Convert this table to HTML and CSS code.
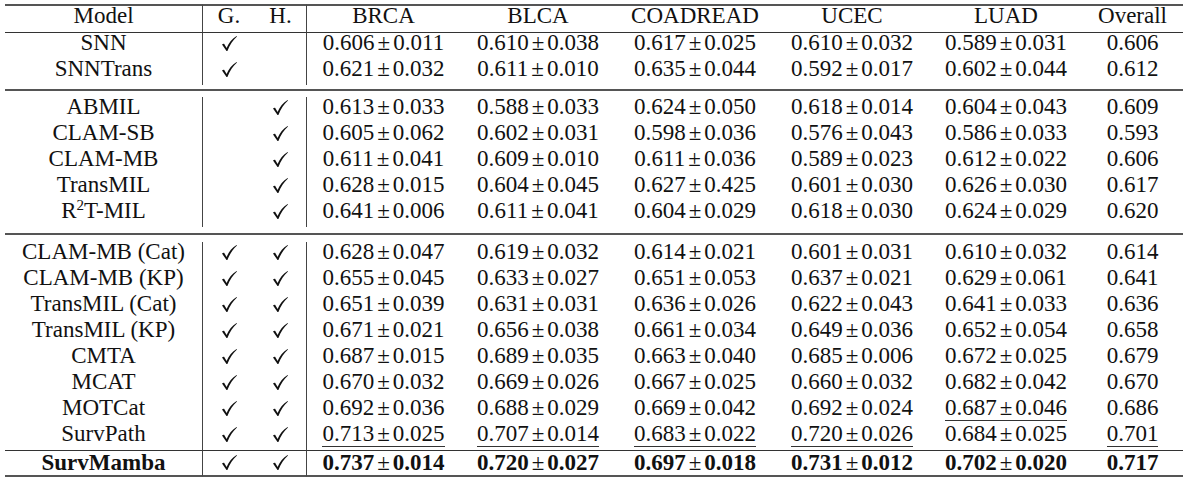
FILE: index.html
```html
<!DOCTYPE html>
<html lang="en">
<head>
	<meta charset="UTF-8">
	<meta name="viewport" content="width=device-width, initial-scale=1.0">
	<title>Survival prediction results</title>
	<link rel="stylesheet" href="styles.css">
</head>
<body>
	<svg width="0" height="0" class="defs">
		<symbol id="ck" viewBox="0 0 15 15">
			<path d="M0 8.6 C0.7 7.9 1.5 7.6 2.1 7.8 L4.6 11.9 C6.8 7 9.6 3 14.6 0 L15 0.5 C10.8 4.2 8 8.8 5.4 14.9 L4.5 15 Z"/>
		</symbol>
	</svg>
	<div class="wrap">
		<table class="res">
			<colgroup>
				<col style="width:198px"><col style="width:52px"><col style="width:52px">
				<col style="width:153px"><col style="width:156px"><col style="width:158px">
				<col style="width:156px"><col style="width:152px"><col style="width:101px">
			</colgroup>
			<thead>
				<tr>
					<th class="m">Model</th><th>G.</th><th class="h">H.</th>
					<th>BRCA</th><th>BLCA</th><th>COADREAD</th><th>UCEC</th><th>LUAD</th><th>Overall</th>
				</tr>
			</thead>
			<tbody>
				<tr>
					<td class="m">SNN</td><td><svg class="chk"><use href="#ck"/></svg></td><td class="h"></td>
					<td>0.606<span class="pm">±</span>0.011</td><td>0.610<span class="pm">±</span>0.038</td><td>0.617<span class="pm">±</span>0.025</td><td>0.610<span class="pm">±</span>0.032</td><td>0.589<span class="pm">±</span>0.031</td><td>0.606</td>
				</tr>
				<tr>
					<td class="m">SNNTrans</td><td><svg class="chk"><use href="#ck"/></svg></td><td class="h"></td>
					<td>0.621<span class="pm">±</span>0.032</td><td>0.611<span class="pm">±</span>0.010</td><td>0.635<span class="pm">±</span>0.044</td><td>0.592<span class="pm">±</span>0.017</td><td>0.602<span class="pm">±</span>0.044</td><td>0.612</td>
				</tr>
				<tr class="rule"><td colspan="9"></td></tr>
				<tr class="space"><td colspan="9"></td></tr>

				<tr>
					<td class="m">ABMIL</td><td></td><td class="h"><svg class="chk"><use href="#ck"/></svg></td>
					<td>0.613<span class="pm">±</span>0.033</td><td>0.588<span class="pm">±</span>0.033</td><td>0.624<span class="pm">±</span>0.050</td><td>0.618<span class="pm">±</span>0.014</td><td>0.604<span class="pm">±</span>0.043</td><td>0.609</td>
				</tr>
				<tr>
					<td class="m">CLAM-SB</td><td></td><td class="h"><svg class="chk"><use href="#ck"/></svg></td>
					<td>0.605<span class="pm">±</span>0.062</td><td>0.602<span class="pm">±</span>0.031</td><td>0.598<span class="pm">±</span>0.036</td><td>0.576<span class="pm">±</span>0.043</td><td>0.586<span class="pm">±</span>0.033</td><td>0.593</td>
				</tr>
				<tr>
					<td class="m">CLAM-MB</td><td></td><td class="h"><svg class="chk"><use href="#ck"/></svg></td>
					<td>0.611<span class="pm">±</span>0.041</td><td>0.609<span class="pm">±</span>0.010</td><td>0.611<span class="pm">±</span>0.036</td><td>0.589<span class="pm">±</span>0.023</td><td>0.612<span class="pm">±</span>0.022</td><td>0.606</td>
				</tr>
				<tr>
					<td class="m">TransMIL</td><td></td><td class="h"><svg class="chk"><use href="#ck"/></svg></td>
					<td>0.628<span class="pm">±</span>0.015</td><td>0.604<span class="pm">±</span>0.045</td><td>0.627<span class="pm">±</span>0.425</td><td>0.601<span class="pm">±</span>0.030</td><td>0.626<span class="pm">±</span>0.030</td><td>0.617</td>
				</tr>
				<tr>
					<td class="m">R<sup>2</sup>T-MIL</td><td></td><td class="h"><svg class="chk"><use href="#ck"/></svg></td>
					<td>0.641<span class="pm">±</span>0.006</td><td>0.611<span class="pm">±</span>0.041</td><td>0.604<span class="pm">±</span>0.029</td><td>0.618<span class="pm">±</span>0.030</td><td>0.624<span class="pm">±</span>0.029</td><td>0.620</td>
				</tr>
				<tr class="rule wide"><td colspan="9"></td></tr>
				<tr class="space wide"><td colspan="9"></td></tr>

				<tr>
					<td class="m">CLAM-MB (Cat)</td><td><svg class="chk"><use href="#ck"/></svg></td><td class="h"><svg class="chk"><use href="#ck"/></svg></td>
					<td>0.628<span class="pm">±</span>0.047</td><td>0.619<span class="pm">±</span>0.032</td><td>0.614<span class="pm">±</span>0.021</td><td>0.601<span class="pm">±</span>0.031</td><td>0.610<span class="pm">±</span>0.032</td><td>0.614</td>
				</tr>
				<tr>
					<td class="m">CLAM-MB (KP)</td><td><svg class="chk"><use href="#ck"/></svg></td><td class="h"><svg class="chk"><use href="#ck"/></svg></td>
					<td>0.655<span class="pm">±</span>0.045</td><td>0.633<span class="pm">±</span>0.027</td><td>0.651<span class="pm">±</span>0.053</td><td>0.637<span class="pm">±</span>0.021</td><td>0.629<span class="pm">±</span>0.061</td><td>0.641</td>
				</tr>
				<tr>
					<td class="m">TransMIL (Cat)</td><td><svg class="chk"><use href="#ck"/></svg></td><td class="h"><svg class="chk"><use href="#ck"/></svg></td>
					<td>0.651<span class="pm">±</span>0.039</td><td>0.631<span class="pm">±</span>0.031</td><td>0.636<span class="pm">±</span>0.026</td><td>0.622<span class="pm">±</span>0.043</td><td>0.641<span class="pm">±</span>0.033</td><td>0.636</td>
				</tr>
				<tr>
					<td class="m">TransMIL (KP)</td><td><svg class="chk"><use href="#ck"/></svg></td><td class="h"><svg class="chk"><use href="#ck"/></svg></td>
					<td>0.671<span class="pm">±</span>0.021</td><td>0.656<span class="pm">±</span>0.038</td><td>0.661<span class="pm">±</span>0.034</td><td>0.649<span class="pm">±</span>0.036</td><td>0.652<span class="pm">±</span>0.054</td><td>0.658</td>
				</tr>
				<tr>
					<td class="m">CMTA</td><td><svg class="chk"><use href="#ck"/></svg></td><td class="h"><svg class="chk"><use href="#ck"/></svg></td>
					<td>0.687<span class="pm">±</span>0.015</td><td>0.689<span class="pm">±</span>0.035</td><td>0.663<span class="pm">±</span>0.040</td><td>0.685<span class="pm">±</span>0.006</td><td>0.672<span class="pm">±</span>0.025</td><td>0.679</td>
				</tr>
				<tr>
					<td class="m">MCAT</td><td><svg class="chk"><use href="#ck"/></svg></td><td class="h"><svg class="chk"><use href="#ck"/></svg></td>
					<td>0.670<span class="pm">±</span>0.032</td><td>0.669<span class="pm">±</span>0.026</td><td>0.667<span class="pm">±</span>0.025</td><td>0.660<span class="pm">±</span>0.032</td><td>0.682<span class="pm">±</span>0.042</td><td>0.670</td>
				</tr>
				<tr>
					<td class="m">MOTCat</td><td><svg class="chk"><use href="#ck"/></svg></td><td class="h"><svg class="chk"><use href="#ck"/></svg></td>
					<td>0.692<span class="pm">±</span>0.036</td><td>0.688<span class="pm">±</span>0.029</td><td>0.669<span class="pm">±</span>0.042</td><td>0.692<span class="pm">±</span>0.024</td><td><span class="ul">0.687<span class="pm">±</span>0.046</span></td><td>0.686</td>
				</tr>
				<tr>
					<td class="m">SurvPath</td><td><svg class="chk"><use href="#ck"/></svg></td><td class="h"><svg class="chk"><use href="#ck"/></svg></td>
					<td><span class="ul">0.713<span class="pm">±</span>0.025</span></td><td><span class="ul">0.707<span class="pm">±</span>0.014</span></td><td><span class="ul">0.683<span class="pm">±</span>0.022</span></td><td><span class="ul">0.720<span class="pm">±</span>0.026</span></td><td>0.684<span class="pm">±</span>0.025</td><td><span class="ul">0.701</span></td>
				</tr>
				<tr class="best">
					<td class="m">SurvMamba</td><td><svg class="chk"><use href="#ck"/></svg></td><td class="h"><svg class="chk"><use href="#ck"/></svg></td>
					<td>0.737<span class="pm">±</span>0.014</td><td>0.720<span class="pm">±</span>0.027</td><td>0.697<span class="pm">±</span>0.018</td><td>0.731<span class="pm">±</span>0.012</td><td>0.702<span class="pm">±</span>0.020</td><td>0.717</td>
				</tr>
			</tbody>
		</table>
	</div>
</body>
</html>
```

FILE: styles.css
```css
*{padding: 0;margin: 0;box-sizing: border-box;}
body{
	background: #fff;
	color: #111;
	font-family: "Liberation Serif", "Times New Roman", serif;
	font-size: 23px;
}
.defs{
	position: absolute;
}
.wrap{
	padding: 4px 0 0 5px;
}
.res{
	width: 1178px;
	table-layout: fixed;
	border-collapse: separate;
	border-spacing: 0;
}
.res th,
.res td{
	height: 26px;
	padding: 0;
	text-align: center;
	vertical-align: top;
	line-height: 20px;
	font-weight: normal;
	white-space: nowrap;
}
.res thead th{
	height: 29px;
	border-top: 2px solid #555;
	border-bottom: 1px solid #333;
	line-height: 19px;
}
.res .m,
.res .h{
	border-right: 1px solid #444;
}
.res tr.rule td{
	height: 6px;
	line-height: 0;
	font-size: 0;
	border-bottom: 2px solid #555;
}
.res tr.rule.wide td{
	height: 8px;
}
.res tr.space td{
	height: 6px;
	line-height: 0;
	font-size: 0;
}
.res tr.space.wide td{
	height: 7px;
}
.res tr.best td{
	height: 27px;
	border-top: 1px solid #333;
	border-bottom: 2px solid #555;
	line-height: 23px;
	font-weight: bold;
}
.pm{
	margin: 0 3px;
	font-weight: normal;
}
.ul{
	border-bottom: 1px solid #333;
}
sup{
	font-size: 15px;
	line-height: 0;
	vertical-align: 8px;
}
.chk{
	display: block;
	width: 15px;
	height: 15px;
	margin: 3px auto 0;
	fill: #111;
}
.best .chk{
	margin-top: 4px;
}
```
